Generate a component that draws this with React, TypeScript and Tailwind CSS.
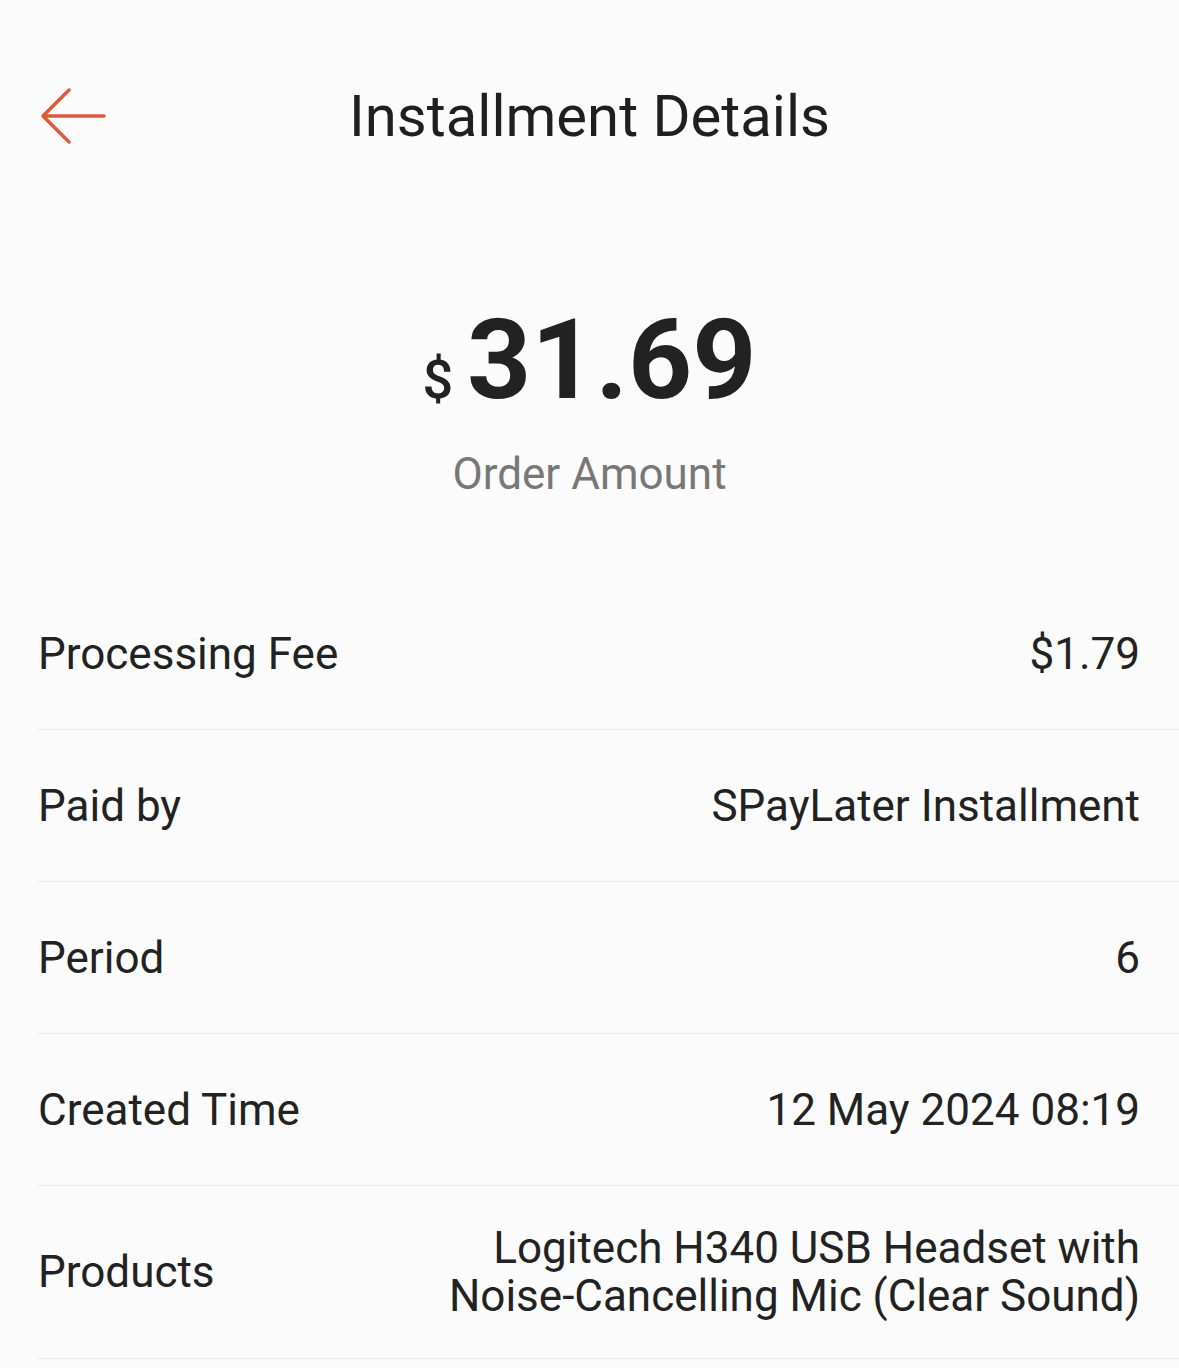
import React from "react";

const rows: { label: string; value: React.ReactNode }[] = [
  { label: "Processing Fee", value: "$1.79" },
  { label: "Paid by", value: "SPayLater Installment" },
  { label: "Period", value: "6" },
  { label: "Created Time", value: "12 May 2024 08:19" },
  {
    label: "Products",
    value: (
      <>
        Logitech H340 USB Headset with
        <br />
        Noise-Cancelling Mic (Clear Sound)
      </>
    ),
  },
];

export default function App() {
  return (
    <div
      className="min-h-[1368px] w-full bg-[#fbfbfb] text-[#222222]"
      style={{ fontFamily: "Roboto, 'Noto Sans', sans-serif" }}
    >
      <header className="grid h-[232px] grid-cols-[1fr_auto_1fr] items-center">
        <div className="flex items-center pl-[40px]">
          <svg width="68" height="58" viewBox="0 0 68 58" fill="none">
            <path
              d="M3 29 H64 M3 29 L29 3 M3 29 L29 55"
              stroke="#de5a3b"
              strokeWidth="3.5"
              strokeLinecap="round"
              strokeLinejoin="round"
            />
          </svg>
        </div>
        <h1 className="text-[58px] leading-[70px] font-normal text-[#1f1f1f]">
          Installment Details
        </h1>
        <div />
      </header>

      <section className="mt-[72px] flex flex-col items-center">
        <div className="flex h-[112px] items-baseline">
          <span className="mr-[14px] text-[54px] leading-[112px] font-medium text-[#222]">$</span>
          <span className="text-[112px] leading-[112px] font-bold text-[#222]">31.69</span>
        </div>
        <div className="mt-[34px] text-[44px] leading-[48px] text-[#777777]">Order Amount</div>
      </section>

      <section className="mt-[80px] ml-[38px]">
        {rows.map((r) => (
          <div
            key={r.label}
            className="flex min-h-[152px] items-center justify-between border-b border-[#e8e8e8] py-[38px] pr-[39px]"
          >
            <span className="text-[44px] leading-[48px]">{r.label}</span>
            <span className="text-right text-[44px] leading-[48px]">{r.value}</span>
          </div>
        ))}
      </section>
    </div>
  );
}
